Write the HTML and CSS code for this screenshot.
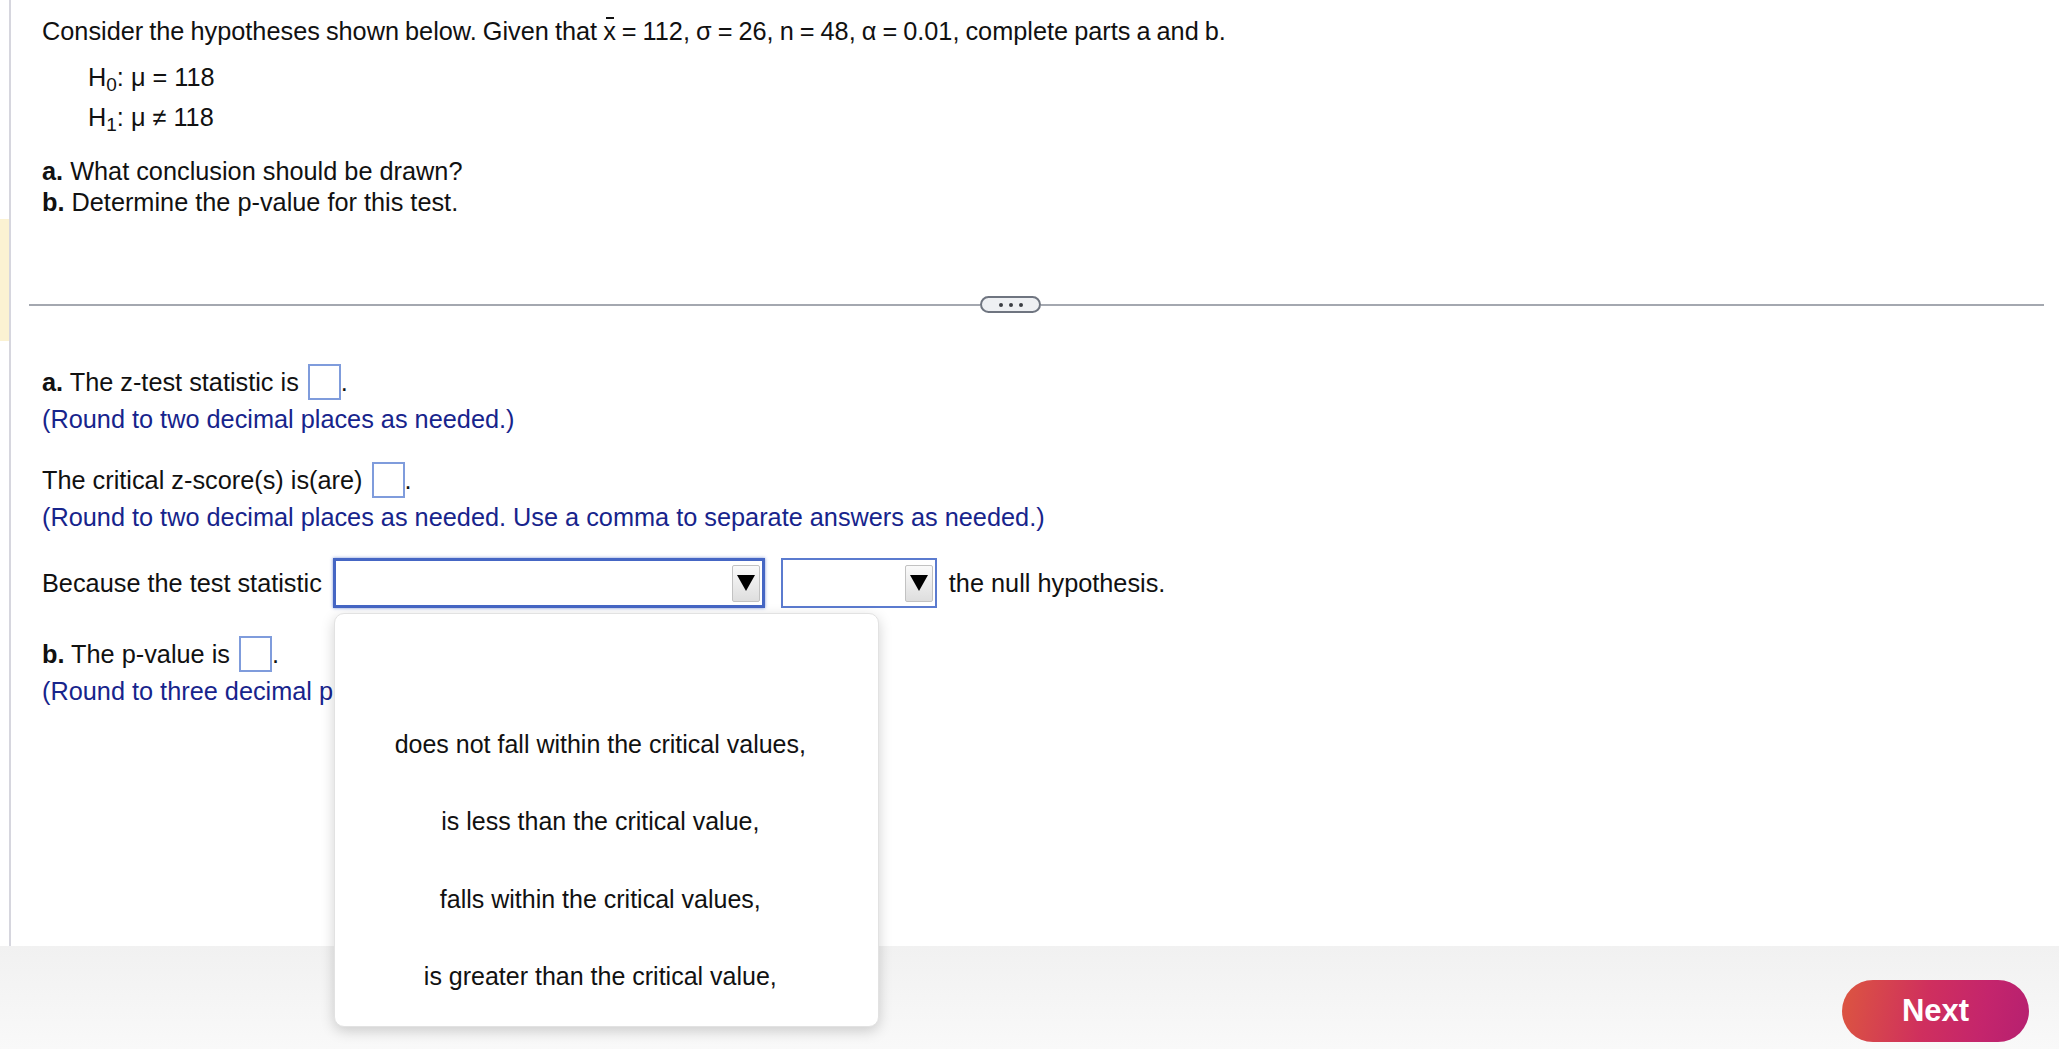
FILE: index.html
```html
<!DOCTYPE html>
<html>
<head>
  <title>Hypothesis Test - Question</title>
  <meta name="viewport" content="width=device-width, initial-scale=1.0">
  <link rel="stylesheet" href="styles.css">
</head>
<body>

  <div class="page">
    <div class="gutter">
      <div class="flag"></div>
    </div>

    <main class="question">
      <p class="intro">Consider the hypotheses shown below. Given that <span class="xbar">x</span> = 112, &sigma; = 26, n = 48, &alpha; = 0.01, complete parts a and b.</p>

      <div class="hypotheses">
        <div class="hyp">H<sub>0</sub>: &mu; = 118</div>
        <div class="hyp">H<sub>1</sub>: &mu; &ne; 118</div>
      </div>

      <div class="parts">
        <div><b>a.</b> What conclusion should be drawn?</div>
        <div><b>b.</b> Determine the p-value for this test.</div>
      </div>

      <!-- expand / collapse divider -->
      <div class="divider">
        <span class="rule rule-left"></span>
        <button class="more-btn" type="button"><i></i><i></i><i></i></button>
        <span class="rule"></span>
      </div>

      <div class="answer">
        <div class="answer-line"><b>a.</b> The z-test statistic is <span class="blank"></span>.</div>
        <div class="hint">(Round to two decimal places as needed.)</div>
      </div>

      <div class="answer">
        <div class="answer-line">The critical z-score(s) is(are) <span class="blank"></span>.</div>
        <div class="hint">(Round to two decimal places as needed. Use a comma to separate answers as needed.)</div>
      </div>

      <div class="answer because">
        <span>Because the test statistic</span>
        <div class="select-wrap">
          <div class="dropdown dropdown-wide is-open">
            <span class="arrow-box"><span class="arrow"></span></span>
          </div>
          <ul class="menu">
            <li></li>
            <li>does not fall within the critical values,</li>
            <li>is less than the critical value,</li>
            <li>falls within the critical values,</li>
            <li>is greater than the critical value,</li>
          </ul>
        </div>
        <div class="dropdown dropdown-small">
          <span class="arrow-box"><span class="arrow"></span></span>
        </div>
        <span>the null hypothesis.</span>
      </div>

      <div class="answer answer-last">
        <div class="answer-line"><b>b.</b> The p-value is <span class="blank"></span>.</div>
        <div class="hint">(Round to three decimal places as needed.)</div>
      </div>
    </main>
  </div>

  <footer class="footer">
    <button class="next-btn" type="button">Next</button>
  </footer>

</body>
</html>
```

FILE: styles.css
```css
html, body {
  margin: 0;
  height: 100%;
  overflow: hidden;
}

body {
  font-family: "Liberation Sans", Arial, sans-serif;
  font-size: 25.3px;
  line-height: 31px;
  color: #111;
  background: #fff;
}

p {
  margin: 0;
}

.page {
  display: flex;
  height: 946px;
}

.gutter {
  width: 9px;
  flex: none;
}

.flag {
  margin-top: 219px;
  height: 122px;
  background: #fbf2d2;
}

.question {
  flex: 1;
  border-left: 2px solid #d6d6de;
  padding: 16px 15px 0 31px;
  position: relative;
}

.intro {
  word-spacing: -1px;
}

/* x with a bar over it */
.xbar {
  position: relative;
  display: inline-block;
}

.xbar::before {
  content: "";
  position: absolute;
  left: 3px;
  top: 1px;
  width: 8px;
  height: 2px;
  background: #111;
}

.hypotheses {
  margin-top: 11px;
  padding-left: 46px;
}

.hyp {
  line-height: 39.5px;
}

.hyp sub {
  font-size: 19px;
  line-height: 0;
  vertical-align: -5px;
}

.parts {
  margin-top: 19px;
}

.divider {
  display: flex;
  align-items: center;
  margin: 78px 0 0 -13px;
}

.rule {
  flex: 1;
  height: 2px;
  background: #a4a8b0;
}

.rule-left {
  flex: 0 0 951px;
}

.more-btn {
  display: flex;
  align-items: center;
  justify-content: center;
  gap: 6px;
  width: 61px;
  height: 17px;
  padding: 0;
  border: 2px solid #6f7580;
  border-radius: 9px;
  background: #eef0f3;
}

.more-btn i {
  width: 4px;
  height: 4px;
  border-radius: 50%;
  background: #3c3f45;
}

.answer {
  margin-top: 27px;
}

.divider + .answer {
  margin-top: 51px;
}

.answer-last {
  margin-top: 28px;
}

.answer-line {
  line-height: 37px;
}

.blank {
  display: inline-block;
  width: 29px;
  height: 32px;
  border: 2px solid #7f9cdc;
  vertical-align: middle;
  margin: -4px 0 0 2px;
}

.hint {
  margin-top: 3px;
  color: #17248c;
}

.because {
  display: flex;
  align-items: center;
  margin-top: 25px;
}

.select-wrap {
  position: relative;
  margin-left: 11px;
}

.dropdown {
  box-sizing: border-box;
  height: 50px;
  display: flex;
  align-items: center;
  justify-content: flex-end;
  padding-right: 2px;
  background: #fff;
  border: 2px solid #5b7bcf;
}

.dropdown-wide {
  width: 432px;
}

.dropdown.is-open {
  border: 3px solid #4566c4;
  box-shadow: 0 0 3px rgba(69, 102, 196, 0.7);
}

.dropdown-small {
  width: 156px;
  margin: 0 12px 0 16px;
}

.arrow-box {
  box-sizing: border-box;
  width: 28px;
  height: 37px;
  display: flex;
  align-items: center;
  justify-content: center;
  border: 1px solid #c2c2c2;
  border-radius: 2px;
  background: linear-gradient(#fafafa, #dedede);
}

.arrow {
  width: 0;
  height: 0;
  border-left: 9px solid transparent;
  border-right: 9px solid transparent;
  border-top: 16px solid #000;
}

.menu {
  position: absolute;
  left: 1px;
  top: 55px;
  z-index: 10;
  box-sizing: border-box;
  width: 545px;
  margin: 0;
  padding: 14px 12px 10px 0;
  list-style: none;
  background: #fff;
  border: 1px solid #e2e2e2;
  border-radius: 10px;
  box-shadow: 0 4px 14px rgba(0, 0, 0, 0.18);
}

.menu li {
  height: 77.5px;
  line-height: 77.5px;
  text-align: center;
  font-size: 25px;
}

.footer {
  height: 103px;
  display: flex;
  justify-content: flex-end;
  align-items: flex-start;
  padding: 34px 30px 0 0;
  box-sizing: border-box;
  background: linear-gradient(#f1f1f1, #f9f9f9);
}

.next-btn {
  width: 187px;
  height: 62px;
  border: none;
  border-radius: 31px;
  background: linear-gradient(100deg, #dc5640 0%, #cf2f5e 45%, #c4256c 75%, #b62070 100%);
  color: #fff;
  font-family: "Liberation Sans", Arial, sans-serif;
  font-size: 31px;
  font-weight: bold;
  cursor: pointer;
}
```
